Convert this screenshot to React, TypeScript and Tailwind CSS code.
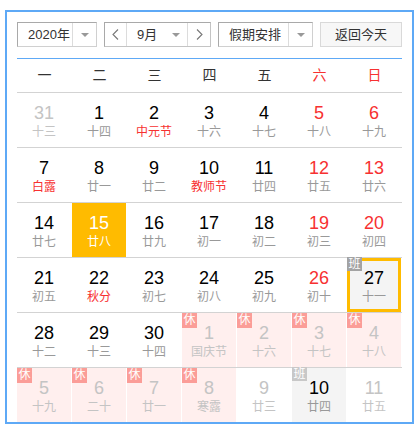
import type { ReactNode } from "react"

type Day = {
  n: number
  l: string
  numRed?: boolean
  lunRed?: boolean
  dim?: boolean
  rest?: boolean
  work?: "dark" | "light"
  sel?: boolean
  today?: boolean
  gray?: boolean
}

const weeks: Day[][] = [
  [
    { n: 31, l: "十三", dim: true },
    { n: 1, l: "十四" },
    { n: 2, l: "中元节", lunRed: true },
    { n: 3, l: "十六" },
    { n: 4, l: "十七" },
    { n: 5, l: "十八", numRed: true },
    { n: 6, l: "十九", numRed: true },
  ],
  [
    { n: 7, l: "白露", lunRed: true },
    { n: 8, l: "廿一" },
    { n: 9, l: "廿二" },
    { n: 10, l: "教师节", lunRed: true },
    { n: 11, l: "廿四" },
    { n: 12, l: "廿五", numRed: true },
    { n: 13, l: "廿六", numRed: true },
  ],
  [
    { n: 14, l: "廿七" },
    { n: 15, l: "廿八", sel: true },
    { n: 16, l: "廿九" },
    { n: 17, l: "初一" },
    { n: 18, l: "初二" },
    { n: 19, l: "初三", numRed: true },
    { n: 20, l: "初四", numRed: true },
  ],
  [
    { n: 21, l: "初五" },
    { n: 22, l: "秋分", lunRed: true },
    { n: 23, l: "初七" },
    { n: 24, l: "初八" },
    { n: 25, l: "初九" },
    { n: 26, l: "初十", numRed: true },
    { n: 27, l: "十一", today: true, work: "dark" },
  ],
  [
    { n: 28, l: "十二" },
    { n: 29, l: "十三" },
    { n: 30, l: "十四" },
    { n: 1, l: "国庆节", dim: true, rest: true },
    { n: 2, l: "十六", dim: true, rest: true },
    { n: 3, l: "十七", dim: true, rest: true },
    { n: 4, l: "十八", dim: true, rest: true },
  ],
  [
    { n: 5, l: "十九", dim: true, rest: true },
    { n: 6, l: "二十", dim: true, rest: true },
    { n: 7, l: "廿一", dim: true, rest: true },
    { n: 8, l: "寒露", dim: true, rest: true },
    { n: 9, l: "廿三", dim: true },
    { n: 10, l: "廿四", gray: true, work: "light" },
    { n: 11, l: "廿五", dim: true },
  ],
]

const weekdays = ["一", "二", "三", "四", "五", "六", "日"]

function Caret() {
  return (
    <svg width="8" height="4" viewBox="0 0 8 4">
      <path d="M0 0 L8 0 L4 4 Z" fill="#999" />
    </svg>
  )
}

function Chevron({ dir }: { dir: "l" | "r" }) {
  return (
    <svg width="7" height="11" viewBox="0 0 7 11">
      <polyline
        points={dir === "l" ? "6,0.5 1,5.5 6,10.5" : "1,0.5 6,5.5 1,10.5"}
        fill="none"
        stroke="#777"
        strokeWidth="1.1"
      />
    </svg>
  )
}

function SelectBox({ width, label, children }: { width: string; label: string; children?: ReactNode }) {
  return (
    <div className={`flex h-[25px] ${width} border border-[#d0d0d0] border-t-[#a9a9a9] border-l-[#a9a9a9] bg-white`}>
      <div className="flex flex-1 items-center pl-[10px] text-[13px] text-[#333]">{label}</div>
      {children}
      <div className="flex w-[24px] items-center justify-center border-l border-[#dcdcdc]">
        <Caret />
      </div>
    </div>
  )
}

function Cell({ d }: { d: Day }) {
  let bg = ""
  if (d.sel) bg = "bg-[#ffbb00]"
  else if (d.rest) bg = "bg-[#ffefee]"
  else if (d.gray) bg = "bg-[#f4f4f4]"
  else if (d.today) bg = "bg-[#f4f4f4] border-[3px] border-[#ffbb00]"

  let numColor = "text-black"
  if (d.sel) numColor = "text-white"
  else if (d.dim) numColor = "text-[#c4c4c4]"
  else if (d.numRed) numColor = "text-[#f73131]"

  let lunColor = "text-[#999]"
  if (d.sel) lunColor = "text-white"
  else if (d.dim) lunColor = "text-[#c4c4c4]"
  else if (d.lunRed) lunColor = "text-[#f73131]"

  return (
    <div className="relative h-full pr-px">
      <div className={`flex h-full flex-col items-center ${d.today ? "pt-[6px]" : "pt-[9px]"} ${bg}`}>
        <div className={`text-[18px] leading-[22px] ${numColor}`}>{d.n}</div>
        <div className={`text-[12px] leading-[16px] ${lunColor}`}>{d.l}</div>
      </div>
      {d.rest && (
        <div className="absolute left-0 top-0 flex h-[15px] w-[15px] items-center justify-center bg-[#fb9d98] text-[12px] leading-[15px] text-white">
          休
        </div>
      )}
      {d.work && (
        <div
          className={`absolute left-0 top-[-1px] flex h-[14px] w-[15px] items-center justify-center text-[12px] leading-[14px] text-white ${
            d.work === "dark" ? "bg-[#a3a3a3]" : "bg-[#c8c8c8]"
          }`}
        >
          班
        </div>
      )}
    </div>
  )
}

export default function App() {
  return (
    <div className="min-h-screen bg-white pl-[5px] pt-[10px] font-['Liberation_Sans','Noto_Sans_CJK_SC',sans-serif]">
      <div className="h-[414px] w-[409px] border-2 border-[#5ea9f6] px-[10px] pt-[10px]">
        <div className="flex h-[25px] gap-[7px]">
          <SelectBox width="w-[80px]" label="2020年" />

          <div className="flex h-[25px] w-[107px] border border-[#c4c4c4] border-t-[#a9a9a9] border-l-[#a9a9a9] bg-white">
            <div className="flex w-[22px] items-center justify-center border-r border-[#dcdcdc]">
              <Chevron dir="l" />
            </div>
            <div className="flex flex-1 items-center justify-between pl-[10px] pr-[7px] text-[13px] text-[#333]">
              <span>9月</span>
              <Caret />
            </div>
            <div className="flex w-[23px] items-center justify-center border-l border-[#dcdcdc]">
              <Chevron dir="r" />
            </div>
          </div>

          <SelectBox width="w-[95px]" label="假期安排" />

          <button className="flex h-[25px] w-[82px] items-center justify-center border border-[#d9d9d9] bg-[#f7f7f7] text-[13px] text-[#333]">
            返回今天
          </button>
        </div>

        <div className="mt-[11px] h-px bg-[#5ea9f6]" />

        <div className="grid h-[33px] grid-cols-7 items-center text-center text-[14px]">
          {weekdays.map((w, i) => (
            <div key={w} className={i >= 5 ? "text-[#f73131]" : "text-[#333]"}>
              {w}
            </div>
          ))}
        </div>

        {weeks.map((week, wi) => (
          <div key={wi} className="grid h-[55px] grid-cols-7 border-t border-[#d3d3d3]">
            {week.map((d, di) => (
              <Cell key={di} d={d} />
            ))}
          </div>
        ))}
      </div>
    </div>
  )
}
